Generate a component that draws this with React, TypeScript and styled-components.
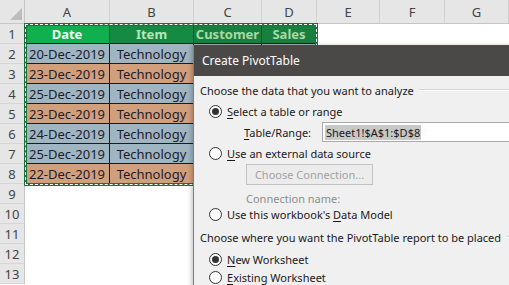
import { Fragment } from "react";
import styled, { createGlobalStyle, css } from "styled-components";

const GlobalStyle = createGlobalStyle`
  html, body { margin: 0; padding: 0; background: #fff; overflow: hidden; }
  body { font-family: "Noto Sans", "Liberation Sans", sans-serif; }
`;

type Tone = "blue" | "orange" | "date" | "item" | "field" | "blank";

const tones: Record<Tone, ReturnType<typeof css>> = {
  blue: css`background: #9fb5c2; color: #1c1c28;`,
  orange: css`background: #d29f7d; color: #1c1c28;`,
  date: css`background: #10b04e; color: #f2fff2; font-weight: 700;`,
  item: css`background: #148a43; color: #b6e6bd; font-weight: 700;`,
  field: css`background: #17803f; color: #a9d9a4; font-weight: 700;`,
  blank: css`background: #fff;`,
};

const Screen = styled.div`
  position: relative;
  width: 509px;
  height: 285px;
  overflow: hidden;
  background: #fff;
`;

const Sheet = styled.div`
  display: grid;
  grid-template-columns: 25px 85px 84px 68px 55px 63px 65px 64px;
  grid-template-rows: 24px repeat(13, 20px);
  font-family: "Noto Sans", "Liberation Sans", sans-serif;
  font-size: 13px;
`;

const Corner = styled.div`
  position: relative;
  background: #e6e6e6;
  border-right: 1px solid #c6c6c6;
  border-bottom: 1px solid #c6c6c6;
  box-sizing: border-box;
  &::after {
    content: "";
    position: absolute;
    right: 2px;
    bottom: 3px;
    border-left: 12px solid transparent;
    border-bottom: 12px solid #bdbdbd;
  }
`;

const ColHead = styled.div`
  display: flex;
  align-items: center;
  justify-content: center;
  background: #e6e6e6;
  color: #444;
  border-right: 1px solid #d2d2d2;
  border-bottom: 1px solid #c6c6c6;
  box-sizing: border-box;
`;

const RowHead = styled.div`
  display: flex;
  align-items: center;
  justify-content: center;
  background: #e6e6e6;
  color: #444;
  border-right: 1px solid #c6c6c6;
  border-bottom: 1px solid #d6d6d6;
  box-sizing: border-box;
`;

const Cell = styled.div<{ $tone: Tone }>`
  display: flex;
  align-items: center;
  justify-content: center;
  white-space: nowrap;
  overflow: hidden;
  box-sizing: border-box;
  ${(p) => tones[p.$tone]}
  ${(p) =>
    p.$tone !== "blank" &&
    css`
      border-right: 1px solid ${p.$tone === "blue" || p.$tone === "orange" ? "#1b1b1b" : "#0b5a2c"};
      border-bottom: 1px solid #1b1b1b;
    `}
`;

const Marquee = styled.div`
  position: absolute;
  left: 24px;
  top: 23px;
  width: 294px;
  height: 163px;
  box-sizing: border-box;
  border: 3px solid #1f6e3d;
  pointer-events: none;
  &::after {
    content: "";
    position: absolute;
    inset: -2px;
    border: 1px dashed #fff;
  }
`;

const Dialog = styled.div`
  position: absolute;
  left: 194px;
  top: 45px;
  width: 340px;
  height: 260px;
  display: flex;
  flex-direction: column;
  background: #f0f0f0;
  box-shadow: -1px 0 0 #7d7d7d, -3px 0 4px rgba(0, 0, 0, 0.2);
  font-family: "Noto Sans", "Liberation Sans", sans-serif;
  font-size: 11px;
  color: #1a1a1a;
`;

const TitleBar = styled.div`
  height: 31px;
  flex: none;
  display: flex;
  align-items: center;
  padding-left: 8px;
  background: #4a4948;
  color: #fff;
  font-size: 12px;
`;

const Body = styled.div`
  display: flex;
  flex-direction: column;
  padding: 6px 0 0 6px;
`;

const GroupTitle = styled.div<{ $mt?: number }>`
  height: 16px;
  margin-top: ${(p) => p.$mt ?? 0}px;
  display: flex;
  align-items: center;
  gap: 5px;
  white-space: nowrap;
  &::after {
    content: "";
    flex: 1;
    border-top: 1px solid #d4d4d4;
    border-bottom: 1px solid #fff;
  }
`;

const RadioRow = styled.label<{ $mt?: number }>`
  height: 16px;
  margin-top: ${(p) => p.$mt ?? 0}px;
  padding-left: 9px;
  display: flex;
  align-items: center;
  gap: 5px;
  white-space: nowrap;
`;

const Radio = styled.span<{ $on?: boolean }>`
  position: relative;
  width: 13px;
  height: 13px;
  flex: none;
  box-sizing: border-box;
  border: 1px solid #333;
  border-radius: 50%;
  background: #fff;
  ${(p) =>
    p.$on &&
    css`
      &::after {
        content: "";
        position: absolute;
        left: 2px;
        top: 2px;
        width: 7px;
        height: 7px;
        border-radius: 50%;
        background: #333;
      }
    `}
`;

const Key = styled.span`
  text-decoration: underline;
  text-underline-offset: 2px;
`;

const RangeRow = styled.div<{ $mt?: number }>`
  height: 20px;
  margin-top: ${(p) => p.$mt ?? 0}px;
  padding-left: 44px;
  display: flex;
  align-items: center;
  white-space: nowrap;
`;

const RangeLabel = styled.span`
  width: 78px;
  flex: none;
`;

const RangeInput = styled.div`
  flex: 1;
  height: 20px;
  box-sizing: border-box;
  display: flex;
  align-items: center;
  padding-left: 2px;
  background: #fff;
  border: 1px solid #a9a9a9;
  border-right: none;
`;

const Selected = styled.span`
  background: #c8c8c8;
  padding: 1px 1px;
  line-height: 13px;
`;

const DisabledButton = styled.div<{ $mt?: number }>`
  width: 127px;
  height: 21px;
  margin-top: ${(p) => p.$mt ?? 0}px;
  margin-left: 46px;
  box-sizing: border-box;
  display: flex;
  align-items: center;
  justify-content: center;
  background: #ececec;
  border: 1px solid #c2c2c2;
  color: #a2a2a2;
`;

const Caption = styled.div<{ $mt?: number }>`
  height: 16px;
  margin-top: ${(p) => p.$mt ?? 0}px;
  padding-left: 46px;
  display: flex;
  align-items: center;
  color: #8e8e8e;
`;

const rows: { date: string; tone: Tone }[] = [
  { date: "20-Dec-2019", tone: "blue" },
  { date: "23-Dec-2019", tone: "orange" },
  { date: "25-Dec-2019", tone: "blue" },
  { date: "23-Dec-2019", tone: "orange" },
  { date: "24-Dec-2019", tone: "blue" },
  { date: "25-Dec-2019", tone: "blue" },
  { date: "22-Dec-2019", tone: "orange" },
];

const columns = ["A", "B", "C", "D", "E", "F", "G"];

export default function App() {
  return (
    <Screen>
      <GlobalStyle />
      <Sheet>
        <Corner />
        {columns.map((c) => (
          <ColHead key={c}>{c}</ColHead>
        ))}

        <RowHead>1</RowHead>
        <Cell $tone="date">Date</Cell>
        <Cell $tone="item">Item</Cell>
        <Cell $tone="field">Customer</Cell>
        <Cell $tone="field">Sales</Cell>
        <Cell $tone="blank" />
        <Cell $tone="blank" />
        <Cell $tone="blank" />

        {rows.map((r, i) => (
          <Fragment key={i}>
            <RowHead>{i + 2}</RowHead>
            <Cell $tone={r.tone}>{r.date}</Cell>
            <Cell $tone={r.tone}>Technology</Cell>
            <Cell $tone={r.tone} />
            <Cell $tone={r.tone} />
            <Cell $tone="blank" />
            <Cell $tone="blank" />
            <Cell $tone="blank" />
          </Fragment>
        ))}

        {[9, 10, 11, 12, 13].map((n) => (
          <Fragment key={n}>
            <RowHead>{n}</RowHead>
            {columns.map((c) => (
              <Cell key={c} $tone="blank" />
            ))}
          </Fragment>
        ))}
      </Sheet>

      <Marquee />

      <Dialog>
        <TitleBar>Create PivotTable</TitleBar>
        <Body>
          <GroupTitle>Choose the data that you want to analyze</GroupTitle>
          <RadioRow $mt={5}>
            <Radio $on />
            <span><Key>S</Key>elect a table or range</span>
          </RadioRow>
          <RangeRow $mt={3}>
            <RangeLabel><Key>T</Key>able/Range:</RangeLabel>
            <RangeInput>
              <Selected>Sheet1!$A$1:$D$8</Selected>
            </RangeInput>
          </RangeRow>
          <RadioRow $mt={3}>
            <Radio />
            <span><Key>U</Key>se an external data source</span>
          </RadioRow>
          <DisabledButton $mt={3}>Choose Connection...</DisabledButton>
          <Caption $mt={5}>Connection name:</Caption>
          <RadioRow>
            <Radio />
            <span>Use this workbook's <Key>D</Key>ata Model</span>
          </RadioRow>
          <GroupTitle $mt={7}>Choose where you want the PivotTable report to be placed</GroupTitle>
          <RadioRow $mt={6}>
            <Radio $on />
            <span><Key>N</Key>ew Worksheet</span>
          </RadioRow>
          <RadioRow $mt={2}>
            <Radio />
            <span><Key>E</Key>xisting Worksheet</span>
          </RadioRow>
        </Body>
      </Dialog>
    </Screen>
  );
}
